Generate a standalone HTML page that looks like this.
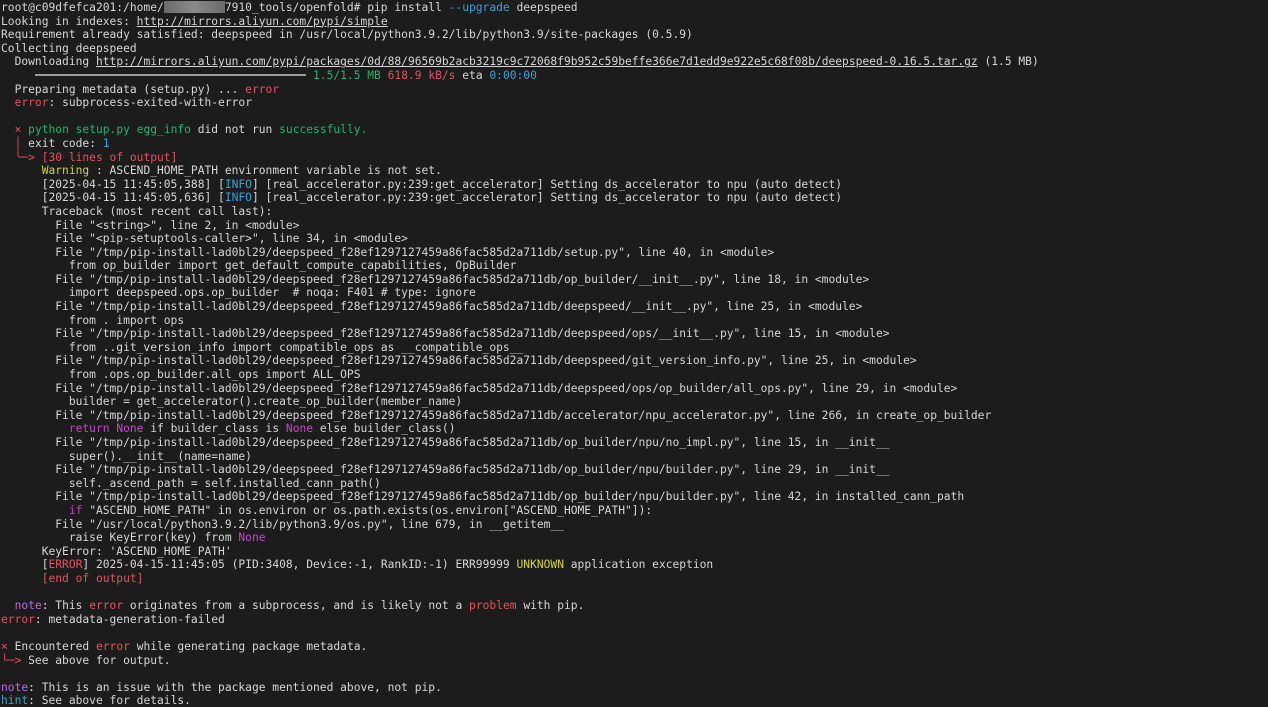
<!DOCTYPE html>
<html><head><meta charset="utf-8"><style>
html,body{margin:0;padding:0;background:#1c1c1c;width:1268px;height:707px;overflow:hidden}
pre{margin:0;padding:1px 0 0 1px;font-family:"DejaVu Sans Mono","Liberation Mono",monospace;font-size:11.27px;line-height:13.59px;color:#d6d6d6;white-space:pre}
.r{color:#e2525c}.g{color:#22b46e}.c{color:#3aa2d2}.y{color:#d4d234}.m{color:#c646c6}.p{color:#b86ae0}.h{color:#3aa2c2}
.u{text-decoration:underline}
.blur{display:inline-block;width:9ch;height:12px;vertical-align:-2px;background:linear-gradient(90deg,#6a6a6a,#8a8a8a,#6a6a6a)}
.bar{display:inline-block;width:40ch;height:2px;background:#9a9a9a;vertical-align:3px}
</style></head><body><pre>root@c09dfefca201:/home/<span class="blur"></span>7910_tools/openfold# pip install <span class="c">--upgrade</span> deepspeed
Looking in indexes: <span class="u">http://mirrors.aliyun.com/pypi/simple</span>
Requirement already satisfied: deepspeed in /usr/local/python3.9.2/lib/python3.9/site-packages (0.5.9)
Collecting deepspeed
  Downloading <span class="u">http://mirrors.aliyun.com/pypi/packages/0d/88/96569b2acb3219c9c72068f9b952c59beffe366e7d1edd9e922e5c68f08b/deepspeed-0.16.5.tar.gz</span> (1.5 MB)
     <span class="bar"></span> <span class="g">1.5/1.5 MB</span> <span class="r">618.9 kB/s</span> eta <span class="c">0:00:00</span>
  Preparing metadata (setup.py) ... <span class="r">error</span>
  <span class="r">error</span>: subprocess-exited-with-error

  <span class="r">×</span> <span class="g">python setup.py egg_info</span> did not run <span class="g">successfully.</span>
  <span class="r">│</span> exit code: <span class="c">1</span>
  <span class="r">╰─&gt; [30 lines of output]</span>
      <span class="y">Warning</span> : ASCEND_HOME_PATH environment variable is not set.
      [2025-04-15 11:45:05,388] [<span class="c">INFO</span>] [real_accelerator.py:239:get_accelerator] Setting ds_accelerator to npu (auto detect)
      [2025-04-15 11:45:05,636] [<span class="c">INFO</span>] [real_accelerator.py:239:get_accelerator] Setting ds_accelerator to npu (auto detect)
      Traceback (most recent call last):
        File "&lt;string&gt;", line 2, in &lt;module&gt;
        File "&lt;pip-setuptools-caller&gt;", line 34, in &lt;module&gt;
        File "/tmp/pip-install-lad0bl29/deepspeed_f28ef1297127459a86fac585d2a711db/setup.py", line 40, in &lt;module&gt;
          from op_builder import get_default_compute_capabilities, OpBuilder
        File "/tmp/pip-install-lad0bl29/deepspeed_f28ef1297127459a86fac585d2a711db/op_builder/__init__.py", line 18, in &lt;module&gt;
          import deepspeed.ops.op_builder  # noqa: F401 # type: ignore
        File "/tmp/pip-install-lad0bl29/deepspeed_f28ef1297127459a86fac585d2a711db/deepspeed/__init__.py", line 25, in &lt;module&gt;
          from . import ops
        File "/tmp/pip-install-lad0bl29/deepspeed_f28ef1297127459a86fac585d2a711db/deepspeed/ops/__init__.py", line 15, in &lt;module&gt;
          from ..git_version_info import compatible_ops as __compatible_ops__
        File "/tmp/pip-install-lad0bl29/deepspeed_f28ef1297127459a86fac585d2a711db/deepspeed/git_version_info.py", line 25, in &lt;module&gt;
          from .ops.op_builder.all_ops import ALL_OPS
        File "/tmp/pip-install-lad0bl29/deepspeed_f28ef1297127459a86fac585d2a711db/deepspeed/ops/op_builder/all_ops.py", line 29, in &lt;module&gt;
          builder = get_accelerator().create_op_builder(member_name)
        File "/tmp/pip-install-lad0bl29/deepspeed_f28ef1297127459a86fac585d2a711db/accelerator/npu_accelerator.py", line 266, in create_op_builder
          <span class="m">return</span> <span class="m">None</span> if builder_class is <span class="m">None</span> else builder_class()
        File "/tmp/pip-install-lad0bl29/deepspeed_f28ef1297127459a86fac585d2a711db/op_builder/npu/no_impl.py", line 15, in __init__
          super().__init__(name=name)
        File "/tmp/pip-install-lad0bl29/deepspeed_f28ef1297127459a86fac585d2a711db/op_builder/npu/builder.py", line 29, in __init__
          self._ascend_path = self.installed_cann_path()
        File "/tmp/pip-install-lad0bl29/deepspeed_f28ef1297127459a86fac585d2a711db/op_builder/npu/builder.py", line 42, in installed_cann_path
          <span class="m">if</span> "ASCEND_HOME_PATH" in os.environ or os.path.exists(os.environ["ASCEND_HOME_PATH"]):
        File "/usr/local/python3.9.2/lib/python3.9/os.py", line 679, in __getitem__
          raise KeyError(key) from <span class="m">None</span>
      KeyError: 'ASCEND_HOME_PATH'
      [<span class="r">ERROR</span>] 2025-04-15-11:45:05 (PID:3408, Device:-1, RankID:-1) ERR99999 <span class="y">UNKNOWN</span> application exception
      <span class="r">[end of output]</span>

  <span class="p">note</span>: This <span class="r">error</span> originates from a subprocess, and is likely not a <span class="r">problem</span> with pip.
<span class="r">error</span>: metadata-generation-failed

<span class="r">×</span> Encountered <span class="r">error</span> while generating package metadata.
<span class="r">╰─&gt;</span> See above for output.

<span class="p">note</span>: This is an issue with the package mentioned above, not pip.
<span class="h">hint</span>: See above for details.</pre></body></html>
